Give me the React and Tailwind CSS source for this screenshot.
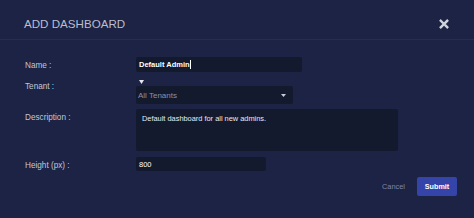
export default function App() {
  return (
    <div className="w-[474px] h-[218px] bg-[#1c2344] flex flex-col overflow-hidden" style={{ fontFamily: '"Liberation Sans", Arial, sans-serif' }}>
      <div className="h-[40px] flex items-center justify-between pl-[24px] pr-[25px] pt-[11px] pb-[2px] border-b border-[#262d50]">
        <div className="text-[11.6px] leading-[14px] text-[#b9bed0]">ADD DASHBOARD</div>
        <svg width="10" height="10" viewBox="0 0 10 10">
          <path d="M1.8 1.8 L8.2 8.2 M8.2 1.8 L1.8 8.2" stroke="#cfd3dd" strokeWidth="2.4" strokeLinecap="square" />
        </svg>
      </div>

      <div className="flex flex-col pl-[25px]">
        <div className="flex items-center mt-[17px]">
          <div className="w-[111px] text-[8.2px] leading-[10px] text-[#c3c7d4] pt-[3px]">Name :</div>
          <div className="w-[166px] h-[15px] bg-[#131a2e] rounded-[2px] flex items-center pl-[3px]">
            <span className="text-[7.5px] leading-[9px] text-white font-semibold">Default Admin</span>
            <span className="w-[1px] h-[9px] bg-white ml-[0.5px]"></span>
          </div>
        </div>

        <div className="flex mt-[6px]">
          <div className="w-[111px] text-[8.2px] leading-[10px] text-[#c3c7d4] mt-[4px]">Tenant :</div>
          <div className="flex flex-col">
            <div className="h-[8px] pl-[3px] flex items-center">
              <svg width="5" height="4" viewBox="0 0 5 4"><path d="M0 0 L5 0 L2.5 4 Z" fill="#e6e8ef" /></svg>
            </div>
            <div className="w-[157px] h-[18px] bg-[#131a2e] rounded-[2px] flex items-center justify-between pl-[2px] pr-[7px] pt-[1px]">
              <span className="text-[8px] leading-[10px] text-[#8b90a6]">All Tenants</span>
              <svg width="5" height="3" viewBox="0 0 5 3"><path d="M0 0 L5 0 L2.5 3 Z" fill="#c8ccd8" /></svg>
            </div>
          </div>
        </div>

        <div className="flex mt-[5px]">
          <div className="w-[111px] text-[8.2px] leading-[10px] text-[#c3c7d4] mt-[4px]">Description :</div>
          <div className="w-[262px] h-[42px] bg-[#131a2e] rounded-[2px] pl-[6px] pt-[5px]">
            <div className="text-[7.4px] leading-[9px] text-[#e8eaf0]">Default dashboard for all new admins.</div>
          </div>
        </div>

        <div className="flex items-center mt-[6px]">
          <div className="w-[111px] text-[8.2px] leading-[10px] text-[#c3c7d4] pt-[4px]">Height (px) :</div>
          <div className="w-[130px] h-[14px] bg-[#131a2e] rounded-[2px] flex items-center pl-[3px]">
            <span className="text-[7.5px] leading-[9px] text-white">800</span>
          </div>
        </div>

        <div className="flex justify-end items-center mt-[6px] pr-[17px] gap-[12px]">
          <span className="text-[7.4px] leading-[9px] text-[#7d86ad]">Cancel</span>
          <div className="w-[40px] h-[19px] bg-[#3444a9] rounded-[2px] flex items-center justify-center">
            <span className="text-[7.2px] leading-[9px] text-white font-bold">Submit</span>
          </div>
        </div>
      </div>
    </div>
  );
}
